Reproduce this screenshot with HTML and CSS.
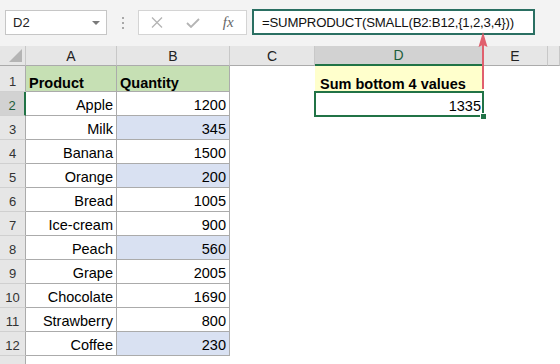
FILE: index.html
```html
<!DOCTYPE html>
<html lang="en">
<head>
    <meta charset="UTF-8">
    <meta name="viewport" content="width=device-width, initial-scale=1.0">
    <title>SUMPRODUCT SMALL</title>
    <link rel="stylesheet" href="styles.css">
</head>
<body>
    <div class="app">
        <div class="toolbar">
            <div class="name-box"><span>D2</span><span class="caret"></span></div>
            <div class="grip"><i></i><i></i><i></i></div>
            <div class="fx-box">
                <span class="slot">
                    <svg width="12" height="11" viewBox="0 0 12 11"><path d="M1 0.5 L11 10.5 M11 0.5 L1 10.5" stroke="#b4b4b4" stroke-width="1.3" fill="none"/></svg>
                </span>
                <span class="slot">
                    <svg width="14" height="10" viewBox="0 0 14 10"><path d="M1 5 L5 9 L13 1" stroke="#b4b4b4" stroke-width="1.8" fill="none"/></svg>
                </span>
                <span class="slot fx">fx</span>
            </div>
            <div class="formula">=SUMPRODUCT(SMALL(B2:B12,{1,2,3,4}))</div>
        </div>

        <div class="sheet">
            <div class="corner"><svg width="25" height="19" viewBox="0 0 25 19"><polygon points="22,3 22,16 9,16" fill="#b4b4b4"/></svg></div>
            <div class="ch">A</div>
            <div class="ch">B</div>
            <div class="ch">C</div>
            <div class="ch sel-col">D</div>
            <div class="ch">E</div>
            <div class="ch"></div>

            <div class="rh">1</div>
            <div class="t head">Product</div>
            <div class="t head">Quantity</div>
            <div></div>
            <div class="label">Sum bottom 4 values</div>
            <div></div>
            <div></div>

            <div class="rh sel-row">2</div>
            <div class="t">Apple</div>
            <div class="t">1200</div>
            <div></div>
            <div class="result">1335</div>
            <div></div>
            <div></div>

            <div class="rh">3</div>
            <div class="t">Milk</div>
            <div class="t low">345</div>
            <div></div><div></div><div></div><div></div>

            <div class="rh">4</div>
            <div class="t">Banana</div>
            <div class="t">1500</div>
            <div></div><div></div><div></div><div></div>

            <div class="rh">5</div>
            <div class="t">Orange</div>
            <div class="t low">200</div>
            <div></div><div></div><div></div><div></div>

            <div class="rh">6</div>
            <div class="t">Bread</div>
            <div class="t">1005</div>
            <div></div><div></div><div></div><div></div>

            <div class="rh">7</div>
            <div class="t">Ice-cream</div>
            <div class="t">900</div>
            <div></div><div></div><div></div><div></div>

            <div class="rh">8</div>
            <div class="t">Peach</div>
            <div class="t low">560</div>
            <div></div><div></div><div></div><div></div>

            <div class="rh">9</div>
            <div class="t">Grape</div>
            <div class="t">2005</div>
            <div></div><div></div><div></div><div></div>

            <div class="rh">10</div>
            <div class="t">Chocolate</div>
            <div class="t">1690</div>
            <div></div><div></div><div></div><div></div>

            <div class="rh">11</div>
            <div class="t">Strawberry</div>
            <div class="t">800</div>
            <div></div><div></div><div></div><div></div>

            <div class="rh">12</div>
            <div class="t">Coffee</div>
            <div class="t low">230</div>
            <div></div><div></div><div></div><div></div>

            <div class="rh">13</div>
            <div></div><div></div><div></div><div></div><div></div><div></div>
        </div>

        <svg class="arrow" width="14" height="60" viewBox="0 0 14 60">
            <line x1="7" y1="14" x2="7" y2="59" stroke="#e0606e" stroke-width="2"/>
            <polygon points="7,2 2.5,17 7,15 11.5,17" fill="#e0606e"/>
        </svg>
    </div>
</body>
</html>
```

FILE: styles.css
```css
body {
    margin: 0;
    font-family: "Liberation Sans", Arial, sans-serif;
    background-color: #ffffff;
}

.app {
    position: relative;
    width: 560px;
    height: 364px;
    overflow: hidden;
}

/* formula bar */
.toolbar {
    height: 46px;
    box-sizing: border-box;
    padding: 10px 0 0 5px;
    background-color: #f3f3f3;
    display: flex;
    align-items: flex-start;
}

.name-box {
    width: 102px;
    height: 25px;
    box-sizing: border-box;
    background-color: #fff;
    border: 1px solid #c6c6c6;
    display: flex;
    align-items: center;
    justify-content: space-between;
    padding: 0 6px 0 7px;
    font-size: 13px;
    color: #222;
}

.caret {
    border-left: 4px solid transparent;
    border-right: 4px solid transparent;
    border-top: 4px solid #7a7a7a;
}

.grip {
    width: 31px;
    height: 25px;
    display: flex;
    flex-direction: column;
    align-items: center;
    justify-content: center;
    gap: 3px;
}

.grip i {
    width: 2px;
    height: 2px;
    background-color: #a8a8a8;
}

.fx-box {
    width: 109px;
    height: 25px;
    box-sizing: border-box;
    background-color: #fff;
    border: 1px solid #d4d4d4;
    display: flex;
    align-items: center;
}

.slot {
    width: 36px;
    display: flex;
    justify-content: center;
}

.fx {
    font-family: "Liberation Serif", serif;
    font-style: italic;
    font-size: 15px;
    color: #666;
}

.formula {
    width: 283px;
    height: 26px;
    margin: -1px 0 0 5px;
    box-sizing: border-box;
    border: 2px solid #2a6f62;
    background-color: #fff;
    padding-left: 8px;
    font-size: 13.2px;
    letter-spacing: -0.2px;
    line-height: 23px;
    color: #111;
    white-space: nowrap;
}

/* sheet grid */
.sheet {
    display: grid;
    grid-template-columns: 26px 91px 113px 85px 168px 65px 12px;
    grid-template-rows: 20px 26px repeat(12, 24px);
    font-size: 14.5px;
    color: #000;
}

.sheet > div {
    box-sizing: border-box;
    display: flex;
    align-items: flex-end;
    padding: 0 3px 2px;
    white-space: nowrap;
}

.corner {
    background-color: #e6e6e6;
    border-right: 1px solid #c8c8c8;
    border-bottom: 1px solid #ababab;
    padding: 0 !important;
}

.ch {
    background-color: #e6e6e6;
    border-right: 1px solid #c8c8c8;
    border-bottom: 1px solid #ababab;
    justify-content: center;
    align-items: center !important;
    padding: 0 !important;
    font-size: 14px;
    color: #222;
}

.ch.sel-col {
    background-color: #d2d2d2;
    border-bottom: 2px solid #217346;
    color: #1d5e3b;
}

.rh {
    background-color: #e6e6e6;
    border-right: 1px solid #ababab;
    border-bottom: 1px solid #d0d0d0;
    justify-content: center;
    font-size: 13px;
    color: #333;
}

.rh.sel-row {
    background-color: #d2d2d2;
    border-right: 2px solid #217346;
    color: #1d5e3b;
}

.t {
    border-right: 1px solid #ababab;
    border-bottom: 1px solid #ababab;
    justify-content: flex-end;
}

.t.head {
    background-color: #c6e0b4;
    font-weight: bold;
    justify-content: flex-start;
    padding-bottom: 0 !important;
}

.t.low {
    background-color: #d9e1f2;
}

.label {
    background-color: #ffffcc;
    font-weight: bold;
    padding: 0 0 0 5px !important;
}

.result {
    position: relative;
    justify-content: flex-end;
    padding-right: 2px !important;
}

.result::after {
    content: "";
    position: absolute;
    left: -1px;
    top: -1px;
    right: -1px;
    bottom: -1px;
    border: 2px solid #217346;
}

.result::before {
    content: "";
    position: absolute;
    right: -4px;
    bottom: -4px;
    width: 5px;
    height: 5px;
    background-color: #217346;
    border: 1px solid #fff;
    z-index: 1;
}

.arrow {
    position: absolute;
    left: 476px;
    top: 30px;
}
```
